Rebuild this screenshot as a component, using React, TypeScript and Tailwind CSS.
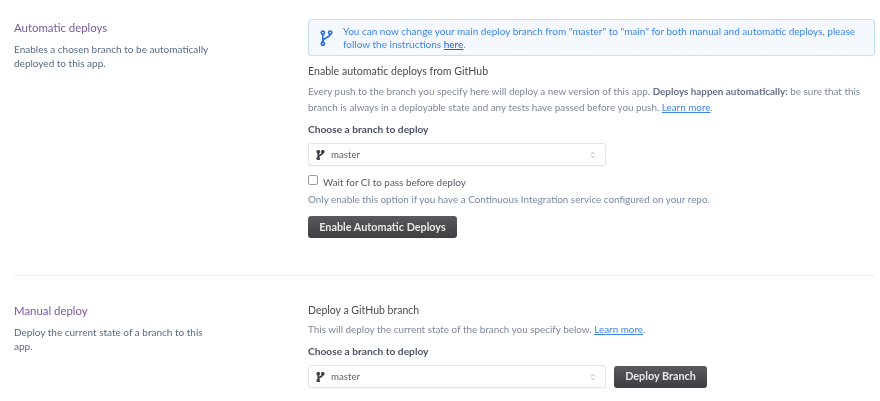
import { ChevronsUpDown } from "lucide-react"

function BranchIcon({ className, strokeWidth = 2 }: { className: string; strokeWidth?: number }) {
  return (
    <svg viewBox="0 0 16 20" fill="none" stroke="currentColor" strokeWidth={strokeWidth} className={className}>
      <circle cx="3.5" cy="3.5" r="2" />
      <circle cx="12.5" cy="3.5" r="2" />
      <circle cx="3.5" cy="17" r="2" />
      <path d="M3.5 5.5V15M12.5 5.5C12.5 10 3.5 9.5 3.5 14" />
    </svg>
  )
}

function BranchSelect() {
  return (
    <div className="flex h-[23px] w-[298px] items-center rounded-[3px] border border-[#dfe3ee] bg-white pl-[7px] pr-[8px] shadow-[0_1px_1px_rgba(0,0,0,0.03)]">
      <BranchIcon strokeWidth={3.4} className="h-[10px] w-[9px] text-[#3f3f44]" />
      <span className="ml-[6px] text-[9.7px] text-[#5f6470]">master</span>
      <ChevronsUpDown size={8} className="ml-auto text-[#8c92a0]" />
    </div>
  )
}

function DarkButton({ children, className }: { children: string; className: string }) {
  return (
    <button className={`flex h-[22px] items-center justify-center rounded-[3px] bg-gradient-to-b from-[#5a5a5e] to-[#3f3f43] text-[10.8px] font-bold text-[#e8e8ea] ${className}`}>
      {children}
    </button>
  )
}

function SideInfo({ title, text }: { title: string; text: string }) {
  return (
    <div className="w-[294px] shrink-0 pr-[98px]">
      <h2 className="text-[11.4px] leading-[14px] text-[#79589f]">{title}</h2>
      <p className="mt-[7px] text-[10px] leading-[14px] text-[#596b85]">{text}</p>
    </div>
  )
}

export default function App() {
  return (
    <div className="h-[401px] w-[880px] overflow-hidden bg-white pl-[14px] pr-[5px] font-['Lato',sans-serif] blur-[0.35px]">
      <section className="flex border-b border-[#eef0f4] pb-[37px] pt-[21px]">
        <SideInfo title="Automatic deploys" text="Enables a chosen branch to be automatically deployed to this app." />
        <div className="min-w-0 flex-1">
          <div className="-mt-[2px] flex h-[37px] items-center rounded-[3px] border border-[#c5dcf8] bg-[#f5f9ff] pl-[11px]">
            <BranchIcon className="h-[18px] w-[13px] shrink-0 text-[#2a6fdb]" />
            <p className="ml-[10px] text-[10px] leading-[13px] text-[#3d85ea]">
              You can now change your main deploy branch from "master" to "main" for both manual and automatic deploys, please
              <br />
              follow the instructions <a className="text-[#1a5fd0] underline">here</a>.
            </p>
          </div>
          <h3 className="mt-[8px] text-[10.6px] leading-[14px] text-[#4a4a50]">Enable automatic deploys from GitHub</h3>
          <p className="mt-[5px] text-[9.9px] leading-[16px] text-[#7e8799]">
            Every push to the branch you specify here will deploy a new version of this app. <b className="text-[#67708a]">Deploys happen automatically:</b> be sure that this
            <br />
            branch is always in a deployable state and any tests have passed before you push. <a className="text-[#3d85ea] underline">Learn more</a>.
          </p>
          <h4 className="mt-[7px] text-[10.2px] font-bold leading-[14px] text-[#4c5264]">Choose a branch to deploy</h4>
          <div className="mt-[7px]">
            <BranchSelect />
          </div>
          <label className="mt-[10px] flex h-[12px] items-center">
            <span className="-mt-[5px] h-[10px] w-[10px] rounded-[2px] border border-[#9a9ca3] bg-white" />
            <span className="ml-[5px] text-[9.9px] text-[#55586a]">Wait for CI to pass before deploy</span>
          </label>
          <p className="mt-[4px] text-[9.9px] leading-[14px] text-[#7a88a6]">Only enable this option if you have a Continuous Integration service configured on your repo.</p>
          <DarkButton className="mt-[10px] w-[149px]">Enable Automatic Deploys</DarkButton>
        </div>
      </section>
      <section className="flex pt-[28px]">
        <SideInfo title="Manual deploy" text="Deploy the current state of a branch to this app." />
        <div className="min-w-0 flex-1">
          <h3 className="-mt-[1px] text-[10.5px] leading-[14px] text-[#4a4a50]">Deploy a GitHub branch</h3>
          <p className="mt-[4px] text-[9.9px] leading-[16px] text-[#7e8799]">
            This will deploy the current state of the branch you specify below. <a className="text-[#3d85ea] underline">Learn more</a>.
          </p>
          <h4 className="mt-[7px] text-[10.2px] font-bold leading-[14px] text-[#4c5264]">Choose a branch to deploy</h4>
          <div className="mt-[7px] flex items-center gap-[8px]">
            <BranchSelect />
            <DarkButton className="w-[93px]">Deploy Branch</DarkButton>
          </div>
        </div>
      </section>
    </div>
  )
}
